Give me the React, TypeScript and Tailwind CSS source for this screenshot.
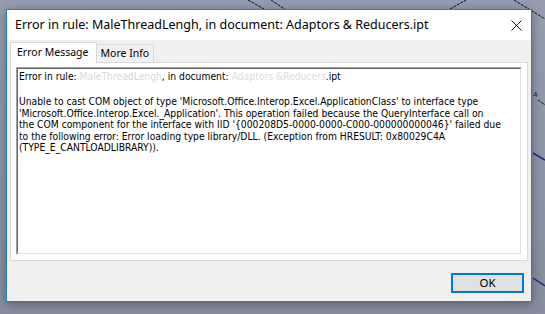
import React from 'react';

const uiFont = { fontFamily: '"Noto Sans", "Open Sans", sans-serif' };
const boxFont = { fontFamily: '"DejaVu Sans Condensed", "DejaVu Sans", sans-serif' };

function Backdrop() {
    return (
        <svg className="absolute inset-0" width="545" height="314" viewBox="0 0 545 314">
            <g stroke="#111" strokeWidth="1" strokeDasharray="3 1" fill="none">
                <line x1="248" y1="0" x2="264" y2="9" />
                <line x1="271" y1="0" x2="286" y2="10" />
                <line x1="450" y1="9" x2="466" y2="0" />
                <line x1="514" y1="0" x2="545" y2="19" />
                <line x1="538" y1="100" x2="545" y2="105" />
            </g>
            <text x="533" y="97" fontSize="8" fill="#222" fontFamily="Liberation Sans, sans-serif">4</text>
            <g stroke="#2e1f84" strokeWidth="1.5" fill="none">
                <line x1="533" y1="153" x2="545" y2="160" />
                <line x1="533" y1="278" x2="545" y2="286" />
            </g>
        </svg>
    );
}

function CloseIcon() {
    return (
        <svg width="11" height="11" viewBox="0 0 11 11">
            <path d="M0.5 0.5 L10.5 10.5 M10.5 0.5 L0.5 10.5" stroke="#111" strokeWidth="1" fill="none" />
        </svg>
    );
}

const lines = [
    "Unable to cast COM object of type 'Microsoft.Office.Interop.Excel.ApplicationClass' to interface type",
    "'Microsoft.Office.Interop.Excel._Application'. This operation failed because the QueryInterface call on",
    "the COM component for the interface with IID '{000208D5-0000-0000-C000-000000000046}' failed due",
    'to the following error: Error loading type library/DLL. (Exception from HRESULT: 0x80029C4A',
    '(TYPE_E_CANTLOADLIBRARY)).',
];

export default function App() {
    return (
        <div className="relative w-[545px] h-[314px] overflow-hidden bg-gradient-to-b from-[#959eaf] to-[#868e9f]">
            <Backdrop />
            <div className="relative pl-[6px] pt-[9px]">
                <div className="w-[526px] h-[293px] flex flex-col border border-[#1b80d6] bg-[#f0f0f0] shadow-[0_2px_10px_rgba(0,0,0,0.35)]">
                    <div className="h-[30px] flex items-center justify-between bg-white pl-[8px] pr-[9px] pt-[1px]">
                        <span className="text-[12.5px] text-black" style={uiFont}>
                            Error in rule: MaleThreadLengh, in document: Adaptors &amp; Reducers.ipt
                        </span>
                        <CloseIcon />
                    </div>

                    <div className="flex flex-col px-[3px] pt-[2px]">
                        <div className="flex items-end text-[10.5px] text-black" style={uiFont}>
                            <div className="relative z-10 h-[21px] -mb-px flex items-center pl-[6px] pr-[7px] bg-white border border-b-0 border-[#d9d9d9]">
                                Error Message
                            </div>
                            <div className="h-[18px] -ml-px flex items-center px-[4px] bg-[#f0f0f0] border border-b-0 border-[#d9d9d9]">
                                More Info
                            </div>
                        </div>
                        <div className="h-[199px] border border-[#d9d9d9] bg-white pt-[4px] pb-[5px] px-[5px]">
                            <div className="h-full border border-t-[#a0a0a0] border-l-[#a0a0a0] border-r-white border-b-white">
                                <div
                                    className="h-full border border-t-[#696969] border-l-[#696969] border-r-[#e3e3e3] border-b-[#e3e3e3] bg-white pl-[1px] pt-[2px] text-[10.25px] leading-[11.4px] text-black"
                                    style={boxFont}
                                >
                                    <div className="whitespace-nowrap">
                                        Error in rule: <span className="text-[#d8d8d8]">MaleThreadLengh</span>, in document:{' '}
                                        <span className="text-[#dcdcdc]">Adaptors &amp;Reducers</span>.ipt
                                    </div>
                                    <div className="mt-[14px]">
                                        {lines.map((l) => (
                                            <div key={l} className="whitespace-nowrap">
                                                {l}
                                            </div>
                                        ))}
                                    </div>
                                </div>
                            </div>
                        </div>
                    </div>

                    <div className="flex justify-end pr-[7px] pt-[12px]">
                        <button
                            className="w-[73px] h-[20px] flex items-center justify-center border-2 border-[#0078d7] bg-[#e1e1e1] text-[11.5px] text-black"
                            style={uiFont}
                        >
                            OK
                        </button>
                    </div>
                </div>
            </div>
        </div>
    );
}
